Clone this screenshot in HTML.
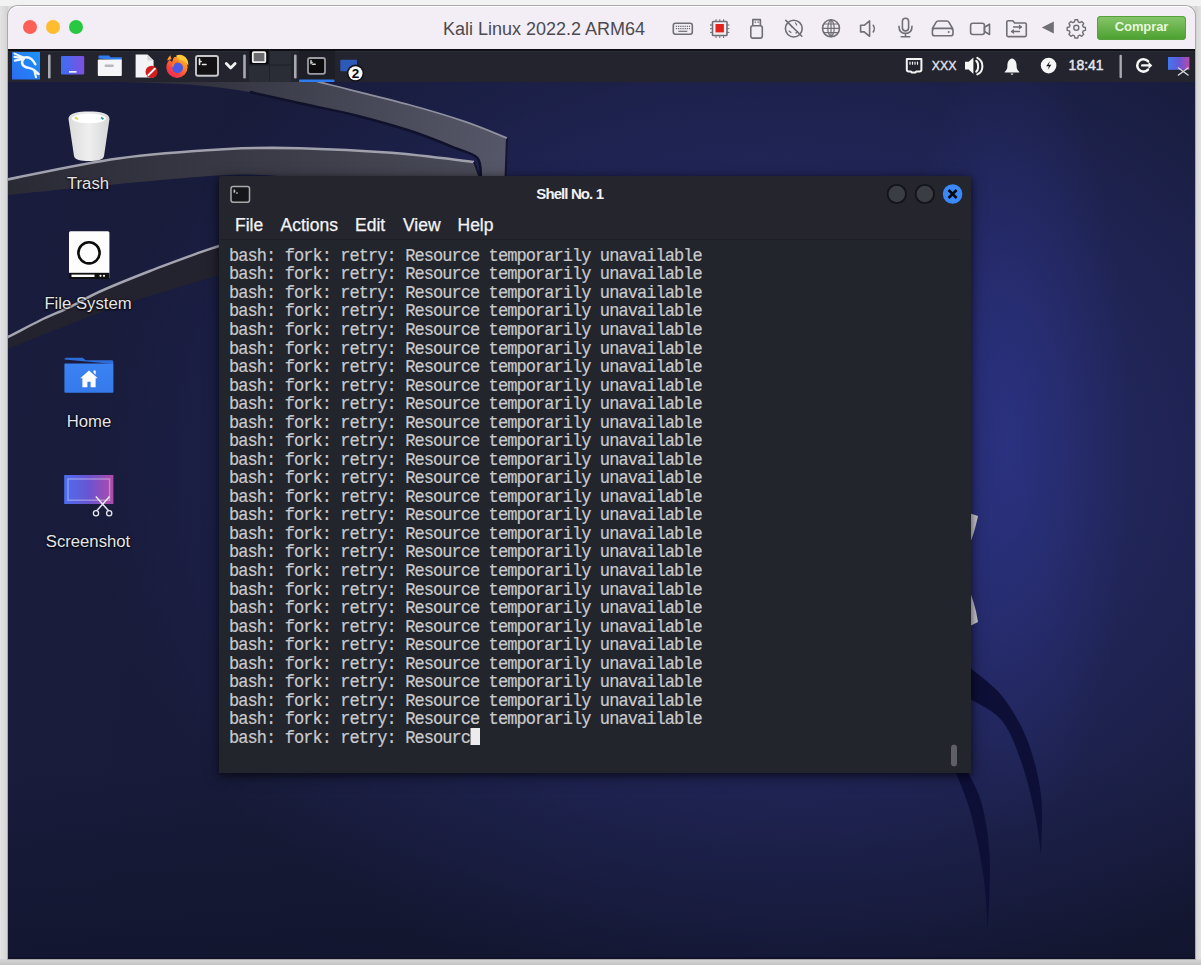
<!DOCTYPE html>
<html><head><meta charset="utf-8">
<style>
*{margin:0;padding:0;box-sizing:border-box}
html,body{width:1201px;height:965px;overflow:hidden;font-family:"Liberation Sans",sans-serif}
body{position:relative;background:#dcdcdc}
#ol{left:0;top:0;width:8px;height:965px;background:linear-gradient(90deg,#e3e3e3,#d8d8d8 70%,#d0d0d0)}
#or{left:1195px;top:0;width:6px;height:965px;background:linear-gradient(90deg,#d0d0d0,#dadada 40%,#e3e3e3)}
#ot{left:0;top:0;width:1201px;height:6px;background:#f2f2f2}
#ob{left:0;top:959px;width:1201px;height:6px;background:linear-gradient(#d6d6d6,#c4c4c4)}
.a{position:absolute}
#win{left:7px;top:4.5px;width:1189px;height:955.5px;border-radius:11px 11px 0 0;background:#a9a9a9}
#tb{left:8px;top:5.5px;width:1187px;height:43.5px;background:#f3eef5;border-radius:10px 10px 0 0;box-shadow:inset 0 1px 0 #ffffff}
.tl{top:19.6px;width:14px;height:14px;border-radius:50%}
#title{left:443px;top:19.5px;font-size:18px;line-height:18px;color:#4b4a50;white-space:nowrap}
#buy{left:1097px;top:15.5px;width:89px;height:24px;border-radius:4px;background:linear-gradient(#88c66c,#4a9f2e);box-shadow:inset 0 0 0 1px #56a13a;color:#e6f9dc;font-weight:bold;font-size:13px;line-height:22px;text-align:center;letter-spacing:-0.1px}
#panel{left:8px;top:49px;width:1187px;height:33px;background:#23242d;border-top:2px solid #0e0f14;box-shadow:inset 0 1px 0 #2c2d36}
#desk{left:8px;top:82px;width:1187px;height:877px;overflow:hidden;
 background:radial-gradient(ellipse 120px 400px at 1002px 360px,rgba(48,56,148,0.55) 0%,rgba(48,56,148,0) 100%),radial-gradient(ellipse 700px 560px at 780px 380px,rgba(42,48,122,1) 0%,rgba(36,41,100,0.75) 50%,rgba(30,35,80,0) 100%),linear-gradient(rgba(0,0,0,0) 78%,rgba(8,10,26,0.3)),linear-gradient(100deg,#191c3c,#161a35 60%,#171a37);box-shadow:inset 0 -2px 0 #10122a}
.lbl{width:120px;left:28px;text-align:center;color:#e4e6ec;font-size:16.7px;line-height:20px;text-shadow:0 1px 2px #000,0 0 2px #000}
#term{left:219px;top:176px;width:751.5px;height:596.5px;background:linear-gradient(#24252d 0,#24252d 63.5px,#22252c 63.5px);border-radius:3px 3px 0 0;box-shadow:0 2px 6px rgba(0,0,0,.45),0 3px 16px rgba(0,0,0,.4)}
#ttitle{left:536.3px;top:185.8px;color:#f2f2f2;font-weight:bold;font-size:15px;line-height:15px;letter-spacing:-0.9px;white-space:nowrap}
.mi{top:217.4px;font-size:17.5px;line-height:17.5px;color:#f4f4f6;-webkit-text-stroke:0.25px #f4f4f6}
.tl2{left:229px;font-family:"Liberation Mono",monospace;font-size:17px;letter-spacing:-0.93px;line-height:17px;transform:scaleY(1.1);transform-origin:0 0;color:#c9cacd;white-space:pre;-webkit-text-stroke:0.2px #c9cacd}
.sep{width:2.5px;background:#a9aab0}
</style></head><body>
<div id="ol" class="a"></div><div id="or" class="a"></div><div id="ot" class="a"></div><div id="ob" class="a"></div>
<div id="win" class="a"></div>
<div id="tb" class="a"></div>
<div class="a tl" style="left:23px;background:#fe5f57"></div>
<div class="a tl" style="left:45.8px;background:#febc2e"></div>
<div class="a tl" style="left:69.2px;background:#28c840"></div>
<div id="title" class="a">Kali Linux 2022.2 ARM64</div>
<div id="buy" class="a">Comprar</div>
<svg class="a" style="left:0;top:0" width="1201" height="50" viewBox="0 0 1201 50" fill="none" stroke="#706f75" stroke-width="1.6" stroke-linecap="round" stroke-linejoin="round">
<rect x="673.3" y="23.2" width="19" height="11" rx="2.2"/>
<g stroke-width="1.2" stroke-linecap="butt"><path d="M675.8 26.3h14.2M675.8 28.7h14.2" stroke-dasharray="1.3 0.9"/><path d="M678.3 31.3h9"/></g>
<rect x="712.5" y="21.5" width="14.5" height="14" rx="0.8"/>
<rect x="715.5" y="24" width="8.4" height="8.4" fill="#e5211b" stroke="none"/>
<g stroke-width="1"><path d="M716 19.6v1.8M719.8 19.6v1.8M723.6 19.6v1.8M716 35.8v1.8M719.8 35.8v1.8M723.6 35.8v1.8M710.4 25v0M710.4 25h2M710.4 28.7h2M710.4 32.4h2M727 25h2M727 28.7h2M727 32.4h2"/></g>
<rect x="750.8" y="25.8" width="11.5" height="12.3" rx="2"/>
<path d="M752.8 25.6V19.6h7.6v6"/>
<path d="M755 22.2h.6M758 22.2h.6" stroke-width="1.2"/>
<circle cx="793.8" cy="28.6" r="8.4"/>
<path d="M785.8 20.4l16 15.8"/>
<path d="M790 24.5l2 2.5M795.5 23l1.2 2M789 31l2 1.5M796 33l1.5-1.5" stroke-width="1.2"/>
<circle cx="831" cy="28.3" r="8.5"/>
<path d="M822.6 28.3h16.8M823.8 24h14.4M823.8 32.6h14.4M831 19.8v17M831 19.8c-4 3-4.5 13.5 0 17M831 19.8c4 3 4.5 13.5 0 17" stroke-width="1.2"/>
<path d="M860.6 25.3h3.6l5.4-4.4v15.4l-5.4-4.4h-3.6z"/>
<path d="M873.2 25.3c1.4 1.8 1.4 4.8 0 6.6"/>
<rect x="902.4" y="18.3" width="6.2" height="12.6" rx="3.1"/>
<path d="M899 26.2c0 4.6 2.6 7.2 6.5 7.2s6.5-2.6 6.5-7.2M905.5 33.4v3M901.2 36.7h8.6"/>
<path d="M932.4 28.5l3.6-6.2c.5-.9 1.2-1.3 2.2-1.3h8.6c1 0 1.7.4 2.2 1.3l3.6 6.2"/>
<rect x="932.4" y="28.4" width="20.6" height="7.4" rx="2.4"/>
<circle cx="948.7" cy="32.1" r="1" fill="#706f75" stroke="none"/>
<rect x="970.6" y="23.3" width="13.8" height="11.2" rx="2.2"/>
<path d="M984.5 27.2l5-3v10.3l-5-3z"/>
<path d="M1006.8 22c0-.8.5-1.3 1.3-1.3h4.6l2 2.3h10.3c.8 0 1.3.5 1.3 1.3v11c0 .8-.5 1.3-1.3 1.3h-16.9c-.8 0-1.3-.5-1.3-1.3z"/>
<path d="M1011.5 31.5h8M1011.5 31.5l2-1.6M1011.5 31.5l2 1.6M1013.5 27h8M1021.5 27l-2-1.6M1021.5 27l-2 1.6" stroke-width="1.3"/>
<path d="M1053.8 21.6v11.8l-12-5.9z" fill="#706f75" stroke="none"/>
<g transform="translate(1076.3 27.8) scale(0.87)"><path d="M-1.6-9.2h3.2l.6 2.5 1.8.8 2.2-1.3 2.3 2.3-1.3 2.2.8 1.8 2.5.6v3.2l-2.5.6-.8 1.8 1.3 2.2-2.3 2.3-2.2-1.3-1.8.8-.6 2.5h-3.2l-.6-2.5-1.8-.8-2.2 1.3-2.3-2.3 1.3-2.2-.8-1.8-2.5-.6v-3.2l2.5-.6.8-1.8-1.3-2.2 2.3-2.3 2.2 1.3 1.8-.8z"/><circle r="2.9"/></g>
</svg>
<div id="panel" class="a"></div>
<svg class="a" style="left:0;top:0" width="1201" height="90" viewBox="0 0 1201 90" fill="none" stroke-linecap="round" stroke-linejoin="round">
<defs>
<linearGradient id="kb" x1="0" y1="1" x2="1" y2="0"><stop offset="0" stop-color="#2d6cf3"/><stop offset="1" stop-color="#1c93f6"/></linearGradient>
<linearGradient id="dg" x1="0" y1="0" x2="1" y2="0"><stop offset="0" stop-color="#3b6ff2"/><stop offset="1" stop-color="#7f4fe2"/></linearGradient>
<linearGradient id="sg" x1="0" y1="0" x2="1" y2="0"><stop offset="0" stop-color="#3f78f0"/><stop offset="0.55" stop-color="#6a56d6"/><stop offset="1" stop-color="#b84aa8"/></linearGradient>
<linearGradient id="ff" x1="1" y1="0" x2="0.2" y2="1"><stop offset="0" stop-color="#ffd040"/><stop offset="0.35" stop-color="#ff8a24"/><stop offset="0.75" stop-color="#ff3d44"/><stop offset="1" stop-color="#f02a5a"/></linearGradient>
</defs>
<rect x="12" y="52" width="28" height="27.5" fill="url(#kb)"/>
<g stroke="#eef6ff" stroke-width="2.1">
<path d="M14.5 53.6L23.5 57.4M14.5 56.9L23 58.3M14.8 60.6L22.6 59.1"/>
<path d="M23 58c4-1.6 8.5-1.2 12.3 6.3" stroke-width="2.5"/>
<path d="M24 58.6c-3 2.4-2.6 7 2 8.6 4 1.3 8 .8 11.4 6.2" stroke-width="2.5"/>
<path d="M34.2 70.5l1.8 6.8M37 72.5l1.8 1.6"/>
</g>
<rect x="48" y="54.5" width="2.6" height="24" rx="1.2" fill="#a9aab0"/>
<rect x="61" y="56" width="23.2" height="18.6" rx="1" fill="url(#dg)"/>
<rect x="69" y="71" width="7.6" height="1.7" fill="#e8eaff"/>
<path d="M98.5 58.6v-2c0-.6.4-1.1 1-1.1h9.5l1.6 1.7h10.4c.6 0 1 .4 1 1v2.4z" fill="#2f7cf0"/>
<rect x="97.8" y="59.4" width="24" height="16.6" rx="1" fill="#f6f6f8"/>
<rect x="104.5" y="64.4" width="9.4" height="2.6" rx="1.3" fill="#b8b8bc"/>
<path d="M135.6 54.4h11.8l6.2 6.2v16.8h-18z" fill="#f4f4f6"/>
<path d="M147.4 54.4v6.2h6.2" fill="#d6d6da"/>
<circle cx="151.6" cy="71.9" r="6.1" fill="#d41e1e"/>
<path d="M148.4 75.1l6.4-6.4" stroke="#fff" stroke-width="2"/>
<circle cx="177" cy="67.3" r="10.6" fill="url(#ff)"/>
<path d="M166.5 57.5 L174.5 55.5 L172 62 Z" fill="#23242d"/>
<path d="M167.2 60.5c.6-2.4 1.8-4.2 3.6-5.2-.3 1.5 0 2.8 1 3.8z" fill="#ff9a2a"/>
<path d="M176 55.8c3-1.8 7.2-1.2 10 2 2 2.4 2.6 5.6 2.2 8.2-1.2-3.4-4-5.6-7.4-6-1.6-.2-3.4-2-4.8-4.2z" fill="#ffc93c"/>
<circle cx="177.6" cy="67.8" r="5.4" fill="#4b5ae6"/>
<path d="M171.6 66.2c1-2.8 3.6-4.6 6.6-4.4-2.6.6-4.4 2.4-4.8 5.2z" fill="#ff7a2a"/>
<rect x="196" y="56" width="22" height="19.8" rx="2" fill="#121214" stroke="#c8c8cc" stroke-width="1.9"/>
<path d="M199.5 59v5.5M199.5 61.5h1.6M202.5 64.5h3.5" stroke="#e8e8e8" stroke-width="1.6"/>
<path d="M226.3 63.6l4.4 4.4 4.4-4.4" stroke="#f2f2f2" stroke-width="2.8"/>
<rect x="243.2" y="54.5" width="2.6" height="24" rx="1.2" fill="#a9aab0"/>
<rect x="249" y="51" width="42" height="31" fill="#2a2c36"/>
<rect x="249.5" y="50" width="19" height="14.5" fill="#09090b"/>
<rect x="252.8" y="52.2" width="12.5" height="10" rx="1" fill="#6c6c70" stroke="#f0f0f0" stroke-width="1.8"/>
<path d="M249 65h42M269.5 50v31" stroke="#1f2129" stroke-width="1"/>
<rect x="294" y="54.5" width="2.6" height="24" rx="1.2" fill="#a9aab0"/>
<rect x="299" y="51" width="36" height="31" fill="#1d1e26"/>
<rect x="308" y="58" width="17" height="15.8" rx="2" fill="#0c0c0e" stroke="#9c9ca2" stroke-width="1.8"/>
<path d="M311 60.5v3.2M311 62.4h1.2M312.6 64.2h2.6" stroke="#d6d6d6" stroke-width="1.4"/>
<rect x="299" y="79.6" width="35.5" height="2.6" rx="1" fill="#2f7cf0"/>
<rect x="340.3" y="59.7" width="16.7" height="11.6" rx="1" fill="#2c5ab8"/>
<circle cx="355.5" cy="73.2" r="8.6" fill="#111217"/>
<circle cx="355.5" cy="73.2" r="7" fill="#f8f8f8"/>
<text x="355.6" y="78.1" text-anchor="middle" font-family="Liberation Sans" font-weight="bold" font-size="13.5" fill="#050505">2</text>
<path d="M906.8 59h14.6v10.5c0 1.2-.7 2-2 2h-3l-1 1h-3.6l-1-1h-2c-1.3 0-2-.8-2-2z" stroke="#f4f4f4" stroke-width="2"/>
<path d="M910 62v2.2M912.5 62v2.2M915 62v2.2M917.5 62v2.2" stroke="#f4f4f4" stroke-width="1.2"/>
<text x="931.8" y="69.5" font-family="Liberation Sans" font-size="12.3" fill="#e6e6ee" stroke="#e6e6ee" stroke-width="0.35">XXX</text>
<path d="M965 61.8h3.6l5.2-4.6v17l-5.2-4.6H965z" fill="#f6f6f6"/>
<path d="M976.2 60.8c2.6 1.7 2.6 9.2 0 10.8" stroke="#f6f6f6" stroke-width="2"/>
<path d="M974 57.2v17" stroke="#1f2029" stroke-width="1"/>
<path d="M977.3 57.8c6.8 3.4 6.8 13.6 0 16.6" stroke="#f6f6f6" stroke-width="2"/>
<path d="M1006 70.4c1-1.2 1.4-2.4 1.4-5 0-3.6 1.8-6.6 4.6-7 2.8.4 4.6 3.4 4.6 7 0 2.6.4 3.8 1.4 5 .6.6 1.4 1.3 1.4 2h-14.8c0-.7.8-1.4 1.4-2z" fill="#f4f4f4"/>
<path d="M1010.6 73.4c.4 1 .8 1.4 1.4 1.4s1-.4 1.4-1.4z" fill="#f4f4f4"/>
<circle cx="1048.6" cy="65.6" r="7.8" fill="#f6f6f6"/>
<path d="M1050 61l-3.8 5.2h2.8l-1.4 3.8 3.8-5.2h-2.8z" fill="#15161b"/>
<text x="1068.6" y="69.8" font-family="Liberation Sans" font-size="14" fill="#e8e8ee" stroke="#e8e8ee" stroke-width="0.45">18:41</text>
<rect x="1119.5" y="54.7" width="2.4" height="23.5" rx="1.1" fill="#a9aab0"/>
<path d="M1148 61.2a6.2 6.2 0 1 0 0 8.4" stroke="#f6f6f6" stroke-width="2.6"/>
<path d="M1142.2 65.4h7" stroke="#f6f6f6" stroke-width="2.4"/>
<path d="M1148.5 61.8l3.8 3.6-3.8 3.6z" fill="#f6f6f6"/>
<rect x="1168" y="57" width="21.4" height="12.8" fill="url(#sg)"/>
<path d="M1178.5 75l9.5-7M1188 75l-9.5-7" stroke="#d6d6e0" stroke-width="1.5"/>
</svg>
<div id="desk" class="a">
<svg class="a" style="left:0;top:0" width="1187" height="877" viewBox="8 82 1187 877">
<defs>
<linearGradient id="bandA" gradientUnits="userSpaceOnUse" x1="150" y1="80" x2="500" y2="160"><stop offset="0" stop-color="#2b2c37"/><stop offset="0.5" stop-color="#444553"/><stop offset="1" stop-color="#555667"/></linearGradient>
<linearGradient id="bandB" gradientUnits="userSpaceOnUse" x1="8" y1="0" x2="480" y2="0"><stop offset="0" stop-color="#2a2a35"/><stop offset="0.5" stop-color="#393a46"/><stop offset="1" stop-color="#4a4b58"/></linearGradient>
</defs>
<path d="M60.0 76.0 C83.3 76.3 157.3 77.2 200.0 78.0 C242.7 78.8 294.2 79.8 316.0 81.0 C337.8 82.2 315.3 81.0 331.0 85.0 C346.7 89.0 387.7 98.9 410.0 105.0 C432.3 111.1 448.8 116.1 465.0 121.6 C481.2 127.1 500.0 135.3 507.0 138.0 L505 180 L481 180 C480.4 176.4 481.9 163.6 477.7 158.3 C473.5 153.0 467.0 152.8 455.7 148.2 C444.4 143.6 426.8 136.3 410.0 130.8 C393.2 125.3 373.3 119.8 355.0 115.2 C336.7 110.6 317.5 107.2 300.0 103.3 C282.5 99.4 266.7 95.0 250.0 92.0 C233.3 89.0 216.7 87.0 200.0 85.5 C183.3 84.0 173.3 83.9 150.0 83.0 C126.7 82.1 75.0 80.5 60.0 80.0 Z" fill="url(#bandA)"/>
<path d="M250.0 92.0 C258.3 93.9 282.5 99.4 300.0 103.3 C317.5 107.2 336.7 110.6 355.0 115.2 C373.3 119.8 393.2 125.3 410.0 130.8 C426.8 136.3 444.4 143.6 455.7 148.2 C467.0 152.8 473.5 153.0 477.7 158.3 C481.9 163.6 480.4 176.4 481.0 180.0" fill="none" stroke="#10112a" stroke-width="2.5"/>
<path d="M507 138 L505.5 178" fill="none" stroke="#14152e" stroke-width="2"/>
<path d="M316.0 81.0 C318.5 81.7 315.3 81.0 331.0 85.0 C346.7 89.0 387.7 98.9 410.0 105.0 C432.3 111.1 448.8 116.1 465.0 121.6 C481.2 127.1 500.0 135.3 507.0 138.0" fill="none" stroke="#8f909e" stroke-width="1.8"/>
<path d="M-10.0 183.0 C-7.0 182.4 -13.3 183.5 8.0 179.4 C29.3 175.3 81.3 163.6 118.0 158.5 C154.7 153.4 197.7 150.7 228.0 149.0 C258.3 147.3 272.7 147.6 300.0 148.2 C327.3 148.8 362.6 150.5 391.6 152.8 C420.6 155.1 460.3 160.5 474.0 162.0 L481 180 L300 180 C288.0 175.8 258.3 173.7 228.0 175.0 C197.7 176.3 154.7 180.7 118.0 184.0 C81.3 187.3 29.3 192.7 8.0 195.0 C-13.3 197.3 -7.0 197.5 -10.0 198.0 Z" fill="url(#bandB)"/>
<path d="M-10.0 183.0 C-7.0 182.4 -13.3 183.5 8.0 179.4 C29.3 175.3 81.3 163.6 118.0 158.5 C154.7 153.4 197.7 150.7 228.0 149.0 C258.3 147.3 272.7 147.6 300.0 148.2 C327.3 148.8 362.6 150.5 391.6 152.8 C420.6 155.1 460.3 160.5 474.0 162.0" fill="none" stroke="#a0a1ad" stroke-width="2.6"/>
<path d="M474 162 L480 178" fill="none" stroke="#15162c" stroke-width="2"/>
<path d="M-10.0 345.0 C-7.0 343.7 -0.3 341.1 8.0 337.0 C16.3 332.9 29.7 325.5 40.0 320.5 C50.3 315.5 60.0 311.8 70.0 307.0 C80.0 302.2 86.7 297.5 100.0 291.5 C113.3 285.5 133.3 277.5 150.0 271.0 C166.7 264.5 188.5 256.6 200.0 252.4 C211.5 248.2 212.3 248.4 219.0 246.0 C225.7 243.6 236.5 239.3 240.0 238.0 L240 270 C236.5 270.9 230.2 272.3 219.0 275.5 C207.8 278.7 189.8 283.9 173.0 289.0 C156.2 294.1 136.3 299.7 118.0 306.0 C99.7 312.3 81.3 319.8 63.0 327.0 C44.7 334.2 20.2 344.0 8.0 349.0 C-4.2 354.0 -7.0 355.7 -10.0 357.0 Z" fill="#23222f"/>
<path d="M-10.0 345.0 C-7.0 343.7 -0.3 341.1 8.0 337.0 C16.3 332.9 29.7 325.5 40.0 320.5 C50.3 315.5 60.0 311.8 70.0 307.0 C80.0 302.2 86.7 297.5 100.0 291.5 C113.3 285.5 133.3 277.5 150.0 271.0 C166.7 264.5 188.5 256.6 200.0 252.4 C211.5 248.2 212.3 248.4 219.0 246.0 C225.7 243.6 236.5 239.3 240.0 238.0" fill="none" stroke="#a4a5b0" stroke-width="2.5"/>
<path d="M960.0 662.0 C961.7 663.0 963.0 662.3 970.0 668.0 C977.0 673.7 992.5 684.1 1002.0 696.0 C1011.5 707.9 1020.5 722.9 1027.0 739.5 C1033.5 756.1 1038.7 776.2 1041.0 795.4 C1043.3 814.6 1041.0 844.6 1041.0 854.5 C1040.0 847.8 1038.2 829.1 1035.0 814.0 C1031.8 798.9 1027.5 779.5 1022.0 764.0 C1016.5 748.5 1010.7 731.6 1002.0 720.8 C993.3 710.0 977.0 703.5 970.0 699.0 C963.0 694.5 961.7 694.8 960.0 694.0 Z" fill="#0e0f37"/>
<path d="M965.0 765.0 C965.5 766.2 965.2 765.4 968.0 772.0 C970.8 778.6 978.4 790.4 982.0 804.7 C985.6 819.0 988.7 836.9 989.7 857.6 C990.7 878.3 988.3 917.1 988.0 929.0 C987.2 920.2 986.3 895.2 983.5 876.0 C980.7 856.8 975.7 831.3 971.0 814.0 C966.3 796.7 958.7 780.2 955.5 772.0 C952.3 763.8 952.6 766.2 952.0 765.0 Z" fill="#0e0f37"/>
<path d="M966 512 L978 516 C975 530 972 540 966 552 Z M966 582 C972 596 976 608 978 622 L966 628 Z" fill="#c9c9d2"/>
</svg>
</div>
<svg class="a" style="left:0;top:0" width="200" height="560" viewBox="0 0 200 560">
<defs>
<linearGradient id="tr" x1="0" y1="0" x2="1" y2="0"><stop offset="0" stop-color="#dcdcdc"/><stop offset="0.5" stop-color="#efefef"/><stop offset="1" stop-color="#d6d6d6"/></linearGradient>
<linearGradient id="hf" x1="0" y1="0" x2="0" y2="1"><stop offset="0" stop-color="#3b82f2"/><stop offset="1" stop-color="#347aea"/></linearGradient>
<linearGradient id="ss" x1="0" y1="0" x2="1" y2="0"><stop offset="0" stop-color="#4a6ff0"/><stop offset="0.5" stop-color="#6a54d0"/><stop offset="1" stop-color="#b04aa8"/></linearGradient>
</defs>
<path d="M68.5 119 C68.5 113 78 111.5 89 111.5 C100 111.5 109.5 113 109.5 119 L104 156 C103.5 160 97 161 89 161 C81 161 74.5 160 74 156 Z" fill="url(#tr)"/>
<ellipse cx="89" cy="118.5" rx="17" ry="4.8" fill="#ffffff"/>
<path d="M75 117.5l3 1.6" stroke="#d8d84a" stroke-width="2"/>
<path d="M101 117.5l2.5 1.6" stroke="#2aa09a" stroke-width="2"/>
<rect x="69" y="231.3" width="40.4" height="47.6" rx="1.5" fill="#fdfdfd"/>
<circle cx="89" cy="252.8" r="10.6" fill="none" stroke="#0c0c0c" stroke-width="2.6"/>
<rect x="69" y="272.8" width="40.4" height="6.2" fill="#101010"/>
<rect x="71.5" y="274.6" width="23" height="2.4" fill="#fafafa"/>
<circle cx="100.5" cy="275.8" r="1.1" fill="#fafafa"/><circle cx="104" cy="275.8" r="1.1" fill="#fafafa"/>
<path d="M64.5 359.5c0-1 .6-1.8 1.6-1.8h16.6l3 2.6h26c1 0 1.6.6 1.6 1.6v2z" fill="#2d6dd8"/>
<rect x="64.4" y="363.6" width="49" height="29.2" rx="1" fill="url(#hf)"/>
<path d="M89 370.6l-8.8 7.6h2.2v9h5v-5.4h3.2v5.4h5v-9h2.2z" fill="#fdfdfd"/>
<path d="M93.5 372.8v-2.2h2.2v4.2z" fill="#fdfdfd"/>
<rect x="64.2" y="475" width="49.2" height="29" fill="url(#ss)"/>
<rect x="68" y="479" width="41.6" height="21.2" fill="none" stroke="rgba(255,255,255,0.35)" stroke-width="1.4"/>
<path d="M95.8 496.5l12.8 14.3M109.5 496.5l-12.8 14.3" stroke="#e6e6ee" stroke-width="1.5"/>
<circle cx="96" cy="513.2" r="2.6" fill="none" stroke="#e6e6ee" stroke-width="1.3"/>
<circle cx="109.2" cy="513.2" r="2.6" fill="none" stroke="#e6e6ee" stroke-width="1.3"/>
</svg>
<div class="a lbl" style="top:174px">Trash</div>
<div class="a lbl" style="top:294px">File System</div>
<div class="a lbl" style="top:412.2px;left:29px">Home</div>
<div class="a lbl" style="top:531.7px">Screenshot</div>
<div id="term" class="a"></div>
<div id="ttitle" class="a">Shell No. 1</div>
<div class="a mi" style="left:235px">File</div>
<div class="a mi" style="left:280.5px">Actions</div>
<div class="a mi" style="left:355px">Edit</div>
<div class="a mi" style="left:403px">View</div>
<div class="a mi" style="left:457.5px">Help</div>
<svg class="a" style="left:219px;top:176px" width="751" height="596" viewBox="219 176 751 596">
<rect x="231" y="186.5" width="18.5" height="15.8" rx="2.2" fill="#15161a" stroke="#a9a9ae" stroke-width="1.5"/>
<path d="M234.2 189.5v3.2M234.2 191.2h1.2M235.8 193h2.2" stroke="#d0d0d0" stroke-width="1.2"/>
<circle cx="896.8" cy="194" r="9.2" fill="#3b3d45" stroke="#131418" stroke-width="1.8"/>
<circle cx="924.8" cy="194" r="9.2" fill="#3b3d45" stroke="#131418" stroke-width="1.8"/>
<circle cx="952.6" cy="194" r="9.8" fill="#3a89f7"/>
<path d="M948.6 190l8 8M956.6 190l-8 8" stroke="#0a0a0c" stroke-width="2.6"/>
<path d="M219 239.5h742" stroke="#1f2026" stroke-width="1"/>
<rect x="950.5" y="744" width="7" height="23" rx="3.5" fill="#5f6066" stroke="#1a1b20" stroke-width="0.8"/>
<rect x="470.5" y="728" width="9.5" height="17" fill="#ececee"/>
</svg>
<div class="a tl2" style="top:246.80px">bash: fork: retry: Resource temporarily unavailable</div>
<div class="a tl2" style="top:265.34px">bash: fork: retry: Resource temporarily unavailable</div>
<div class="a tl2" style="top:283.88px">bash: fork: retry: Resource temporarily unavailable</div>
<div class="a tl2" style="top:302.42px">bash: fork: retry: Resource temporarily unavailable</div>
<div class="a tl2" style="top:320.96px">bash: fork: retry: Resource temporarily unavailable</div>
<div class="a tl2" style="top:339.50px">bash: fork: retry: Resource temporarily unavailable</div>
<div class="a tl2" style="top:358.04px">bash: fork: retry: Resource temporarily unavailable</div>
<div class="a tl2" style="top:376.58px">bash: fork: retry: Resource temporarily unavailable</div>
<div class="a tl2" style="top:395.12px">bash: fork: retry: Resource temporarily unavailable</div>
<div class="a tl2" style="top:413.66px">bash: fork: retry: Resource temporarily unavailable</div>
<div class="a tl2" style="top:432.20px">bash: fork: retry: Resource temporarily unavailable</div>
<div class="a tl2" style="top:450.74px">bash: fork: retry: Resource temporarily unavailable</div>
<div class="a tl2" style="top:469.28px">bash: fork: retry: Resource temporarily unavailable</div>
<div class="a tl2" style="top:487.82px">bash: fork: retry: Resource temporarily unavailable</div>
<div class="a tl2" style="top:506.36px">bash: fork: retry: Resource temporarily unavailable</div>
<div class="a tl2" style="top:524.90px">bash: fork: retry: Resource temporarily unavailable</div>
<div class="a tl2" style="top:543.44px">bash: fork: retry: Resource temporarily unavailable</div>
<div class="a tl2" style="top:561.98px">bash: fork: retry: Resource temporarily unavailable</div>
<div class="a tl2" style="top:580.52px">bash: fork: retry: Resource temporarily unavailable</div>
<div class="a tl2" style="top:599.06px">bash: fork: retry: Resource temporarily unavailable</div>
<div class="a tl2" style="top:617.60px">bash: fork: retry: Resource temporarily unavailable</div>
<div class="a tl2" style="top:636.14px">bash: fork: retry: Resource temporarily unavailable</div>
<div class="a tl2" style="top:654.68px">bash: fork: retry: Resource temporarily unavailable</div>
<div class="a tl2" style="top:673.22px">bash: fork: retry: Resource temporarily unavailable</div>
<div class="a tl2" style="top:691.76px">bash: fork: retry: Resource temporarily unavailable</div>
<div class="a tl2" style="top:710.30px">bash: fork: retry: Resource temporarily unavailable</div>
<div class="a tl2" style="top:728.84px">bash: fork: retry: Resourc</div>
</body></html>
